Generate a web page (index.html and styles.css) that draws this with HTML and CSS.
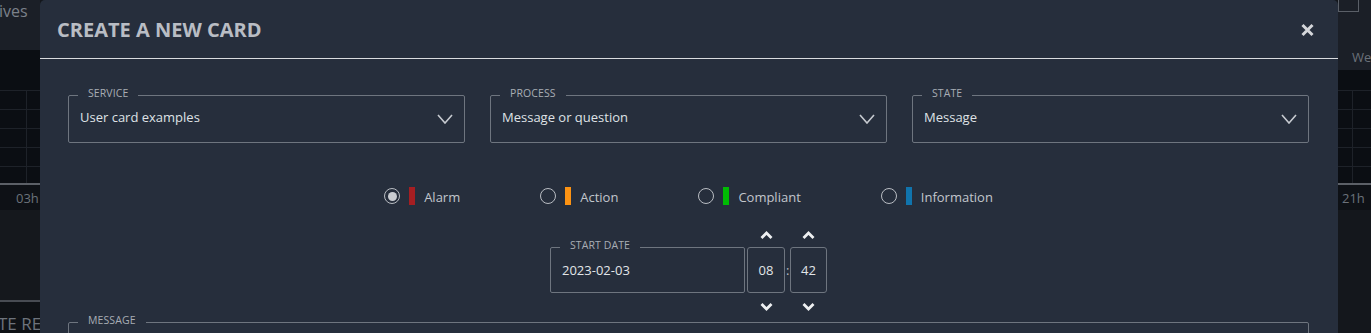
FILE: index.html
```html
<!DOCTYPE html>
<html lang="en">
<head>
<meta charset="utf-8">
<title>Create a new card</title>
<link rel="stylesheet" href="styles.css">
</head>
<body>
<div class="page">
  <div class="side side-left">
    <div class="bg-top"><span class="bg-word">ives</span></div>
    <div class="bg-chart"><div class="grid grid-left"></div></div>
    <div class="bg-axisline"></div>
    <div class="bg-axis"><span class="tick tick-left">03h</span></div>
    <div class="bg-mid"></div>
    <div class="bg-sep"></div>
    <div class="bg-bottom"><span class="bg-heading">TE RE</span></div>
  </div>
  <div class="center"></div>
  <div class="side side-right">
    <div class="bg-top bg-top-right">
      <div class="bg-box"></div>
      <span class="bg-tab">We</span>
    </div>
    <div class="bg-chart bg-chart-right"><div class="grid grid-right"></div></div>
    <div class="bg-axisline"></div>
    <div class="bg-axis"><span class="tick tick-right">21h</span></div>
    <div class="bg-rest"></div>
  </div>

  <div class="modal">
    <div class="modal-header">
      <h1 class="modal-title">CREATE A NEW CARD</h1>
      <svg class="close" width="13" height="14" viewBox="0 0 13 14" aria-label="close">
        <path d="M1.5 2 L11.5 12 M11.5 2 L1.5 12" stroke="#d4d6da" stroke-width="3" fill="none"/>
      </svg>
    </div>
    <div class="modal-body">
      <div class="selects">
        <fieldset class="field">
          <legend>SERVICE</legend>
          <div class="select-value"><span>User card examples</span>
            <svg class="chev" width="16" height="10" viewBox="0 0 16 10"><polyline points="1,1 8,9 15,1" fill="none" stroke="#c6cad0" stroke-width="1.6"/></svg>
          </div>
        </fieldset>
        <fieldset class="field">
          <legend>PROCESS</legend>
          <div class="select-value"><span>Message or question</span>
            <svg class="chev" width="16" height="10" viewBox="0 0 16 10"><polyline points="1,1 8,9 15,1" fill="none" stroke="#c6cad0" stroke-width="1.6"/></svg>
          </div>
        </fieldset>
        <fieldset class="field">
          <legend>STATE</legend>
          <div class="select-value"><span>Message</span>
            <svg class="chev" width="16" height="10" viewBox="0 0 16 10"><polyline points="1,1 8,9 15,1" fill="none" stroke="#c6cad0" stroke-width="1.6"/></svg>
          </div>
        </fieldset>
      </div>

      <div class="severities">
        <label class="sev"><span class="radio checked"></span><span class="bar bar-alarm"></span><span class="sev-label">Alarm</span></label>
        <label class="sev"><span class="radio"></span><span class="bar bar-action"></span><span class="sev-label">Action</span></label>
        <label class="sev"><span class="radio"></span><span class="bar bar-compliant"></span><span class="sev-label">Compliant</span></label>
        <label class="sev"><span class="radio"></span><span class="bar bar-info"></span><span class="sev-label">Information</span></label>
      </div>

      <div class="datetime">
        <fieldset class="field date-field">
          <legend>START DATE</legend>
          <div class="date-value">2023-02-03</div>
        </fieldset>
        <div class="spinner">
          <svg class="arrow arrow-up" width="13" height="8" viewBox="0 0 13 8"><polyline points="1.5,7 6.5,2 11.5,7" fill="none" stroke="#eef0f2" stroke-width="2.8"/></svg>
          <div class="time-box hour">08</div>
          <svg class="arrow arrow-down" width="13" height="8" viewBox="0 0 13 8"><polyline points="1.5,1 6.5,6 11.5,1" fill="none" stroke="#eef0f2" stroke-width="2.8"/></svg>
        </div>
        <div class="colon">:</div>
        <div class="spinner">
          <svg class="arrow arrow-up" width="13" height="8" viewBox="0 0 13 8"><polyline points="1.5,7 6.5,2 11.5,7" fill="none" stroke="#eef0f2" stroke-width="2.8"/></svg>
          <div class="time-box minute">42</div>
          <svg class="arrow arrow-down" width="13" height="8" viewBox="0 0 13 8"><polyline points="1.5,1 6.5,6 11.5,1" fill="none" stroke="#eef0f2" stroke-width="2.8"/></svg>
        </div>
      </div>

      <fieldset class="field message-field">
        <legend>MESSAGE</legend>
        <div class="message-area"></div>
      </fieldset>
    </div>
  </div>
</div>
</body>
</html>
```

FILE: styles.css
```css
* { box-sizing: border-box; }
html, body { margin: 0; padding: 0; }
body {
  font-family: "Open Sans", "Noto Sans", "DejaVu Sans", sans-serif;
  background: #14171c;
  overflow: hidden;
}
.page {
  position: relative;
  display: flex;
  width: 1371px;
  height: 333px;
  overflow: hidden;
  background: #14171c;
}
.side { display: flex; flex-direction: column; overflow: hidden; }
.side-left { width: 40px; }
.side-right { width: 33px; }
.center { flex: 1; background: #14171c; }

.bg-top {
  height: 50px;
  background: #1b1f27;
  display: flex;
  justify-content: flex-start;
  white-space: nowrap;
}
.bg-word {
  font-size: 16px;
  line-height: 22px;
  color: #7b818a;
  margin-left: -1px;
}
.bg-top-right {
  height: 70px;
  display: flex;
  flex-direction: column;
  justify-content: flex-start;
  align-items: flex-start;
}
.bg-box {
  width: 21px;
  height: 12px;
  border: 1px solid #5a5f67;
  border-top: none;
  flex: none;
}
.bg-tab {
  margin-top: 36px;
  margin-left: 14px;
  font-size: 13px;
  line-height: 18px;
  color: #6b717a;
}
.bg-chart {
  height: 133px;
  background: #0b0e13;
  padding-top: 40px;
}
.bg-chart-right { height: 113px; padding-top: 20px; }
.grid {
  height: 100%;
  background-image:
    repeating-linear-gradient(to bottom, #1e2229 0, #1e2229 1px, transparent 1px, transparent 19px);
}
.grid-left {
  background-image:
    linear-gradient(to right, transparent 26px, #1e2229 26px, #1e2229 27px, transparent 27px),
    repeating-linear-gradient(to bottom, #1e2229 0, #1e2229 1px, transparent 1px, transparent 19px);
}
.grid-right {
  background-image:
    linear-gradient(to right, transparent 14px, #1e2229 14px, #1e2229 15px, transparent 15px),
    repeating-linear-gradient(to bottom, #1e2229 0, #1e2229 1px, transparent 1px, transparent 19px);
}
.bg-axisline { height: 2px; background: #5c6067; flex: none; }
.bg-axis {
  height: 25px;
  background: #0e1116;
  display: flex;
  align-items: center;
  flex: none;
}
.tick { font-size: 13px; color: #6b717a; line-height: 18px; }
.tick-left { margin-left: 16px; }
.tick-right { margin-left: 4px; }
.bg-mid { height: 90px; background: #15181d; flex: none; }
.bg-sep { height: 2px; background: #484c53; flex: none; }
.bg-bottom {
  flex: 1;
  background: #0f1216;
  white-space: nowrap;
  overflow: hidden;
}
.bg-heading {
  display: block;
  margin-left: -2px;
  margin-top: 11px;
  font-size: 17px;
  line-height: 22px;
  color: #6d737c;
}
.bg-rest { flex: 1; background: #14171c; }

/* modal */
.modal {
  position: absolute;
  left: 40px;
  top: 0;
  width: 1298px;
  height: 420px;
  background: #262e3c;
  border-radius: 5px 5px 0 0;
  overflow: hidden;
}
.modal-header {
  height: 59px;
  display: flex;
  align-items: center;
  justify-content: space-between;
  padding: 0 24px 0 17px;
  border-bottom: 1px solid #d9dbde;
}
.modal-title {
  margin: 0;
  font-size: 20px;
  font-weight: 700;
  color: #b9bdc4;
  letter-spacing: 0;
}
.close { display: block; margin-top: 2px; }

.modal-body {
  padding: 27px 29px 0 28px;
  display: flex;
  flex-direction: column;
}

.field {
  margin: 0;
  padding: 0 11px 0 11px;
  border: 1px solid #6e757f;
  border-radius: 2px;
  min-width: 0;
}
.field legend {
  margin-left: -2px;
  padding: 0 10px 4px;
  font-size: 10.5px;
  line-height: 14px;
  color: #a8adb4;
  letter-spacing: 0.1px;
}

.selects {
  display: grid;
  grid-template-columns: repeat(3, 1fr);
  column-gap: 25px;
}
.select-value {
  height: 38px;
  padding-bottom: 12px;
  display: flex;
  align-items: center;
  justify-content: space-between;
  font-size: 13px;
  color: #dfe2e6;
}
.chev { display: block; margin-top: 3px; }

.severities {
  margin-top: 44px;
  display: flex;
  justify-content: center;
  gap: 80px;
  height: 18px;
}
.sev {
  display: flex;
  align-items: center;
  height: 18px;
}
.radio {
  width: 16px;
  height: 16px;
  border-radius: 50%;
  border: 1.5px solid #b9bdc3;
  display: flex;
  align-items: center;
  justify-content: center;
}
.radio.checked::after {
  content: "";
  width: 9px;
  height: 9px;
  border-radius: 50%;
  background: #c9ccd1;
}
.bar {
  width: 6px;
  height: 18px;
  margin-left: 9px;
}
.bar-alarm { background: #a51e22; }
.bar-action { background: #fd9313; }
.bar-compliant { background: #00bb03; }
.bar-info { background: #1074ad; }
.sev-label {
  margin-left: 9px;
  font-size: 13px;
  color: #c2c6cc;
  line-height: 18px;
  padding-top: 1px;
}

.datetime {
  margin-top: 23px;
  display: flex;
  justify-content: center;
  align-items: flex-start;
}
.date-field {
  width: 195px;
  margin-top: 10px;
}
.date-value {
  height: 36px;
  padding-bottom: 8px;
  display: flex;
  align-items: center;
  font-size: 13px;
  color: #e2e5e8;
}
.spinner {
  display: flex;
  flex-direction: column;
  align-items: center;
  margin-left: 2px;
}
.spinner + .colon + .spinner { margin-left: 1px; }
.arrow { display: block; }
.arrow-up { margin: 3px 0 8px; }
.arrow-down { margin: 10px 0 0; }
.time-box {
  width: 38px;
  height: 46px;
  border: 1px solid #6e757f;
  border-radius: 3px;
  display: flex;
  align-items: center;
  justify-content: center;
  font-size: 13px;
  color: #e2e5e8;
}
.time-box.minute { width: 37px; }
.colon {
  margin-top: 33px;
  margin-left: 1px;
  width: 3px;
  font-size: 13px;
  color: #b9bdc3;
  line-height: 18px;
}

.message-field { margin-top: 2px; }
.message-area { height: 100px; }
```
